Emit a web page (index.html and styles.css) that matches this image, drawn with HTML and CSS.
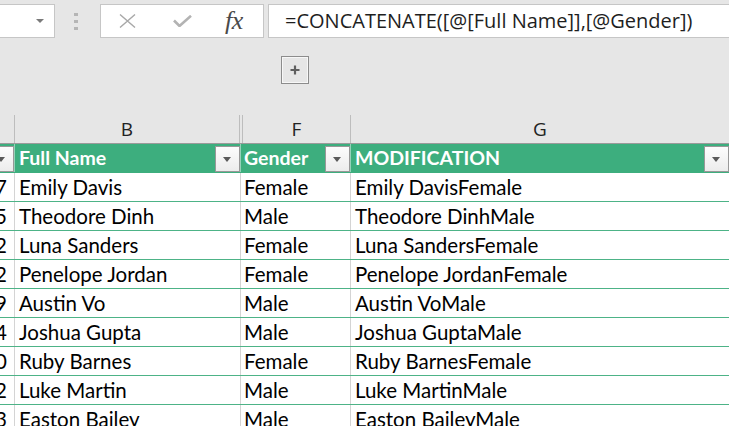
FILE: index.html
```html
<!DOCTYPE html>
<html lang="en">
<head>
  <meta charset="UTF-8">
  <title>Employee Sheet</title>
  <link rel="stylesheet" href="styles.css">
</head>
<body>
  <!-- formula bar -->
  <div class="topbar">
    <div class="namebox"><span class="caret"></span></div>
    <div class="grip"><i></i><i></i><i></i></div>
    <div class="fxbox">
      <svg class="ico-x" width="19" height="14" viewBox="0 0 19 14"><path d="M2 0.5 L17 13.5 M17 0.5 L2 13.5" stroke="#a8a8a8" stroke-width="1.4" fill="none"/></svg>
      <svg class="ico-ok" width="19" height="12" viewBox="0 0 19 12"><path d="M1 5.5 L6.5 11 L18 0.8" stroke="#b3b3b3" stroke-width="2.6" fill="none"/></svg>
      <span class="fx">fx</span>
    </div>
    <div class="formula">=CONCATENATE([@[Full Name]],[@Gender])</div>
  </div>

  <div class="ribbon-gap">
    <div class="expand"><svg width="10" height="10" viewBox="0 0 10 10"><path d="M5 0.5 V9.5 M0.5 5 H9.5" stroke="#5f5f5f" stroke-width="2.2"/></svg></div>
  </div>

  <!-- column letters -->
  <div class="colheads">
    <div class="ch ch-a"></div>
    <div class="ch ch-b">B</div>
    <div class="ch ch-hid"></div>
    <div class="ch ch-f">F</div>
    <div class="ch ch-g">G</div>
  </div>

  <!-- table -->
  <div class="sheet">
    <div class="row thead">
      <div class="cell a"><span class="dd"></span></div>
      <div class="cell b"><span class="label">Full Name</span><span class="dd"></span></div>
      <div class="cell f"><span class="label">Gender</span><span class="dd"></span></div>
      <div class="cell g"><span class="label">MODIFICATION</span><span class="dd"></span></div>
    </div>
    <div class="row"><div class="cell a">7</div><div class="cell b">Emily Davis</div><div class="cell f">Female</div><div class="cell g">Emily DavisFemale</div></div>
    <div class="row"><div class="cell a">5</div><div class="cell b">Theodore Dinh</div><div class="cell f">Male</div><div class="cell g">Theodore DinhMale</div></div>
    <div class="row"><div class="cell a">2</div><div class="cell b">Luna Sanders</div><div class="cell f">Female</div><div class="cell g">Luna SandersFemale</div></div>
    <div class="row"><div class="cell a">2</div><div class="cell b">Penelope Jordan</div><div class="cell f">Female</div><div class="cell g">Penelope JordanFemale</div></div>
    <div class="row"><div class="cell a">9</div><div class="cell b">Austin Vo</div><div class="cell f">Male</div><div class="cell g">Austin VoMale</div></div>
    <div class="row"><div class="cell a">4</div><div class="cell b">Joshua Gupta</div><div class="cell f">Male</div><div class="cell g">Joshua GuptaMale</div></div>
    <div class="row"><div class="cell a">0</div><div class="cell b">Ruby Barnes</div><div class="cell f">Female</div><div class="cell g">Ruby BarnesFemale</div></div>
    <div class="row"><div class="cell a">2</div><div class="cell b">Luke Martin</div><div class="cell f">Male</div><div class="cell g">Luke MartinMale</div></div>
    <div class="row"><div class="cell a">3</div><div class="cell b">Easton Bailey</div><div class="cell f">Male</div><div class="cell g">Easton BaileyMale</div></div>
  </div>
</body>
</html>
```

FILE: styles.css
```css
/* Global */
* {
  box-sizing: border-box;
}

body {
  margin: 0;
  width: 729px;
  height: 426px;
  overflow: hidden;
  background-color: #e6e6e6;
  font-family: Lato, "Liberation Sans", sans-serif;
  color: #000;
}

/* Formula bar */
.topbar {
  display: flex;
  align-items: flex-start;
  height: 38px;
  padding-top: 4px;
}

.namebox {
  display: flex;
  align-items: center;
  justify-content: flex-end;
  width: 56px;
  height: 34px;
  margin-left: -1px;
  padding-right: 10px;
  background-color: #fff;
  border: 1px solid #c6c6c6;
}

.caret {
  width: 0;
  height: 0;
  border-left: 4px solid transparent;
  border-right: 4px solid transparent;
  border-top: 4px solid #7a7a7a;
}

.grip {
  display: flex;
  flex-direction: column;
  gap: 4px;
  width: 5px;
  margin-left: 19px;
  padding-top: 9px;
}

.grip i {
  display: block;
  width: 4px;
  height: 3px;
  background-color: #b5b5b5;
}

.fxbox {
  display: flex;
  align-items: center;
  width: 164px;
  height: 34px;
  margin-left: 21px;
  padding-left: 17px;
  background-color: #fff;
  border: 1px solid #c6c6c6;
}

.ico-ok {
  margin-left: 36px;
}

.fx {
  margin-left: 33px;
  font-family: "Liberation Serif", serif;
  font-style: italic;
  font-size: 26px;
  line-height: 30px;
  color: #4a4a4a;
  letter-spacing: -0.5px;
}

.formula {
  flex: 1;
  height: 34px;
  margin-left: 4px;
  margin-right: -4px;
  padding-left: 16px;
  background-color: #fff;
  border: 1px solid #c6c6c6;
  font-family: "Open Sans", sans-serif;
  font-size: 20px;
  line-height: 31px;
  color: #1e1e1e;
  white-space: nowrap;
}

.ribbon-gap {
  height: 77px;
  padding-top: 18px;
}

.expand {
  display: flex;
  align-items: center;
  justify-content: center;
  width: 28px;
  height: 28px;
  margin-left: 281px;
  border: 1px solid #8c8c8c;
  box-shadow: inset 0 0 0 1px #f7f7f7;
}

/* Column letters */
.colheads {
  display: flex;
  height: 29px;
  border-bottom: 1px solid #9a9a9a;
  font-family: "Open Sans", sans-serif;
  font-size: 19px;
  line-height: 28px;
  color: #222;
}

.ch {
  text-align: center;
  border-right: 1px solid #bdbdbd;
}

.ch-a { width: 15px; }
.ch-b { width: 225px; }
.ch-hid { width: 3px; }
.ch-f { width: 108px; }
.ch-g { flex: 1; border-right: none; }

/* Table */
.row {
  display: flex;
  height: 29px;
  background-color: #fff;
  border-bottom: 1px solid #4db387;
  font-size: 20.5px;
  line-height: 28px;
}

.cell {
  overflow: hidden;
  white-space: nowrap;
  border-right: 1px solid #d4d4d4;
  padding-left: 4px;
}

.cell.a {
  width: 15px;
  padding-left: 0;
  padding-right: 7px;
  text-align: right;
  direction: rtl;
}

.cell.b { width: 226px; }
.cell.f { width: 110px; padding-left: 3px; }
.cell.g { flex: 1; border-right: none; }

.thead {
  background-color: #3dae7e;
  border-bottom-color: #3dae7e;
  color: #fff;
  font-weight: bold;
  font-size: 19.5px;
}

.thead .cell {
  display: flex;
  justify-content: space-between;
  border-right-color: rgba(255, 255, 255, 0.45);
}

.thead .cell.a {
  justify-content: flex-end;
  padding-right: 0;
  direction: ltr;
}

.thead .cell.g {
  overflow: visible;
}

.dd {
  position: relative;
  flex: none;
  width: 25px;
  height: 26px;
  margin-top: 2px;
  background: linear-gradient(#fdfdfd, #ececec);
  border: 1px solid #989898;
}

.dd::after {
  content: "";
  position: absolute;
  left: 7px;
  top: 10px;
  border-left: 4.5px solid transparent;
  border-right: 4.5px solid transparent;
  border-top: 5px solid #5a5a5a;
}
```
